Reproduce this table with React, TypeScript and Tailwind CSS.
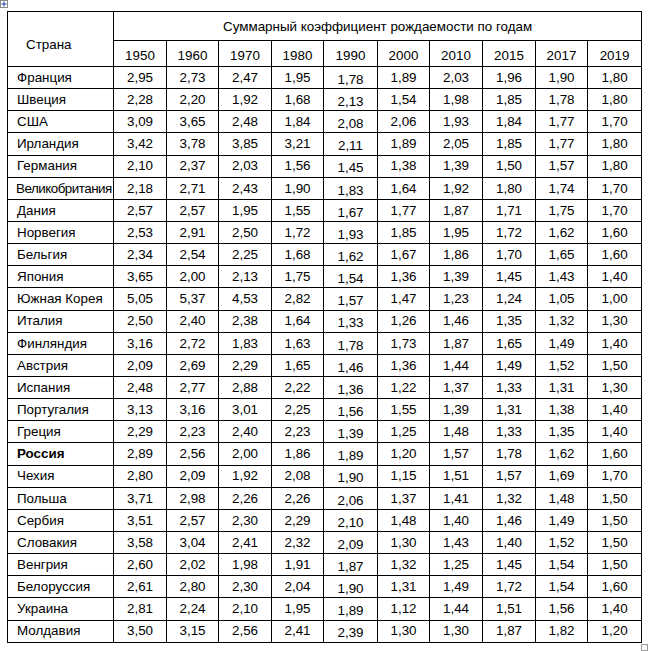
import React from 'react';

const years = ['1950', '1960', '1970', '1980', '1990', '2000', '2010', '2015', '2017', '2019'];

const rows: [string, string[]][] = [
  ['Франция', ['2,95', '2,73', '2,47', '1,95', '1,78', '1,89', '2,03', '1,96', '1,90', '1,80']],
  ['Швеция', ['2,28', '2,20', '1,92', '1,68', '2,13', '1,54', '1,98', '1,85', '1,78', '1,80']],
  ['США', ['3,09', '3,65', '2,48', '1,84', '2,08', '2,06', '1,93', '1,84', '1,77', '1,70']],
  ['Ирландия', ['3,42', '3,78', '3,85', '3,21', '2,11', '1,89', '2,05', '1,85', '1,77', '1,80']],
  ['Германия', ['2,10', '2,37', '2,03', '1,56', '1,45', '1,38', '1,39', '1,50', '1,57', '1,80']],
  ['Великобритания', ['2,18', '2,71', '2,43', '1,90', '1,83', '1,64', '1,92', '1,80', '1,74', '1,70']],
  ['Дания', ['2,57', '2,57', '1,95', '1,55', '1,67', '1,77', '1,87', '1,71', '1,75', '1,70']],
  ['Норвегия', ['2,53', '2,91', '2,50', '1,72', '1,93', '1,85', '1,95', '1,72', '1,62', '1,60']],
  ['Бельгия', ['2,34', '2,54', '2,25', '1,68', '1,62', '1,67', '1,86', '1,70', '1,65', '1,60']],
  ['Япония', ['3,65', '2,00', '2,13', '1,75', '1,54', '1,36', '1,39', '1,45', '1,43', '1,40']],
  ['Южная Корея', ['5,05', '5,37', '4,53', '2,82', '1,57', '1,47', '1,23', '1,24', '1,05', '1,00']],
  ['Италия', ['2,50', '2,40', '2,38', '1,64', '1,33', '1,26', '1,46', '1,35', '1,32', '1,30']],
  ['Финляндия', ['3,16', '2,72', '1,83', '1,63', '1,78', '1,73', '1,87', '1,65', '1,49', '1,40']],
  ['Австрия', ['2,09', '2,69', '2,29', '1,65', '1,46', '1,36', '1,44', '1,49', '1,52', '1,50']],
  ['Испания', ['2,48', '2,77', '2,88', '2,22', '1,36', '1,22', '1,37', '1,33', '1,31', '1,30']],
  ['Португалия', ['3,13', '3,16', '3,01', '2,25', '1,56', '1,55', '1,39', '1,31', '1,38', '1,40']],
  ['Греция', ['2,29', '2,23', '2,40', '2,23', '1,39', '1,25', '1,48', '1,33', '1,35', '1,40']],
  ['Россия', ['2,89', '2,56', '2,00', '1,86', '1,89', '1,20', '1,57', '1,78', '1,62', '1,60']],
  ['Чехия', ['2,80', '2,09', '1,92', '2,08', '1,90', '1,15', '1,51', '1,57', '1,69', '1,70']],
  ['Польша', ['3,71', '2,98', '2,26', '2,26', '2,06', '1,37', '1,41', '1,32', '1,48', '1,50']],
  ['Сербия', ['3,51', '2,57', '2,30', '2,29', '2,10', '1,48', '1,40', '1,46', '1,49', '1,50']],
  ['Словакия', ['3,58', '3,04', '2,41', '2,32', '2,09', '1,30', '1,43', '1,40', '1,52', '1,50']],
  ['Венгрия', ['2,60', '2,02', '1,98', '1,91', '1,87', '1,32', '1,25', '1,45', '1,54', '1,50']],
  ['Белоруссия', ['2,61', '2,80', '2,30', '2,04', '1,90', '1,31', '1,49', '1,72', '1,54', '1,60']],
  ['Украина', ['2,81', '2,24', '2,10', '1,95', '1,89', '1,12', '1,44', '1,51', '1,56', '1,40']],
  ['Молдавия', ['3,50', '3,15', '2,56', '2,41', '2,39', '1,30', '1,30', '1,87', '1,82', '1,20']],
];

const colWidths = ['w-[106px]', 'w-[53px]', 'w-[52px]', 'w-[53px]', 'w-[52px]', 'w-[54px]', 'w-[52px]', 'w-[53px]', 'w-[53px]', 'w-[52px]', 'w-[54px]'];

export default function App() {
  return (
    <div className="relative w-[649px] h-[651px] bg-white text-[13.4px] text-black font-['Liberation_Sans',Arial,sans-serif]">
      {/* table move handle */}
      <svg className="absolute left-0 top-0" width="8" height="8" viewBox="0 0 8 8">
        <rect x="0.5" y="0.5" width="7" height="7" fill="#fff" stroke="#8a8a8a" />
        <path d="M4 1.5v5M1.5 4h5" stroke="#1e3fa8" strokeWidth="1" />
      </svg>

      <div className="pl-[7px] pt-[11px]">
        <table className="table-fixed border-collapse w-[635px] leading-none">
          <colgroup>
            {colWidths.map((w, i) => (
              <col key={i} className={w} />
            ))}
          </colgroup>
          <thead>
            <tr className="h-[29px]">
              <th rowSpan={2} className="border border-black font-normal text-left align-middle pl-[18px] pt-[11px]">
                Страна
              </th>
              <th colSpan={10} className="border border-black font-normal text-center align-middle pt-[1px]">
                Суммарный коэффициент рождаемости по годам
              </th>
            </tr>
            <tr className="h-[26px]">
              {years.map((y) => (
                <th key={y} className="border border-black font-normal text-center align-middle pt-[4px]">
                  {y}
                </th>
              ))}
            </tr>
          </thead>
          <tbody>
            {rows.map(([country, vals]) => (
              <tr key={country} className="h-[22.15px]">
                <td
                  className={`border border-black whitespace-nowrap ${
                    country === 'Великобритания' ? 'pl-[8px] tracking-[-0.5px]' : 'pl-[9px]'
                  } ${country === 'Россия' ? 'font-bold' : ''}`}
                >
                  {country}
                </td>
                {vals.map((v, i) => (
                  <td
                    key={i}
                    className={`border border-black text-center ${i === 4 ? 'pt-[4px]' : ''}`}
                  >
                    {v}
                  </td>
                ))}
              </tr>
            ))}
          </tbody>
        </table>
      </div>

      {/* resize handle */}
      <div className="absolute left-[641px] top-[644px] w-[7px] h-[7px] border border-[#9a9a9a] bg-white" />
    </div>
  );
}
